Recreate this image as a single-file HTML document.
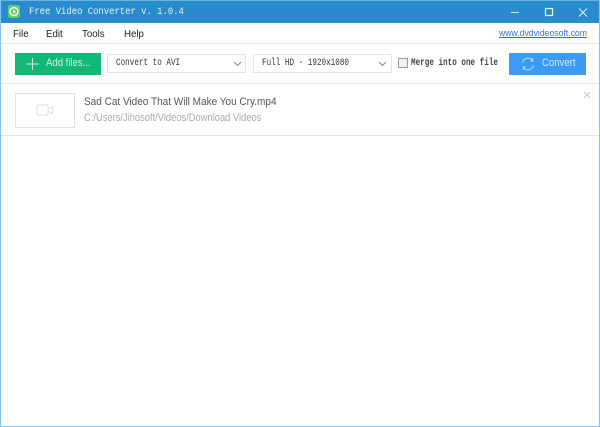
<!DOCTYPE html>
<html>
<head>
<meta charset="utf-8">
<style>
html,body{margin:0;padding:0;background:#fff}
#w{position:relative;width:600px;height:427px;overflow:hidden;background:#fff;font-family:"Liberation Sans",sans-serif}
#w div,#w svg,#w span{position:absolute}
.t{white-space:nowrap;line-height:14px;transform-origin:0 50%}
.m{font-family:"Liberation Mono",monospace;font-size:10px;color:#333;white-space:nowrap;line-height:14px;transform-origin:0 50%;transform:scaleX(.763)}
</style>
</head>
<body>
<div id="w">
<div style="left:0;top:0;width:600px;height:23px;background:#288bcb"></div>
<div style="left:0;top:0;width:600px;height:1px;background:#6db5e6"></div>
<div style="left:0;top:0;width:1px;height:427px;background:#7fc4f2"></div>
<div style="left:599px;top:0;width:1px;height:427px;background:#7fc4f2"></div>
<div style="left:0;top:426px;width:600px;height:1px;background:#7fc4f2"></div>

<svg style="left:7px;top:4px" width="14" height="15" viewBox="0 0 14 15">
<rect x="1" y="1" width="12" height="13" rx="2.500" fill="#5fd06a"/>
<circle cx="7" cy="7.500" r="4" fill="none" stroke="#fff" stroke-width="1.400"/>
<path d="M6 5.500L9 7.500L6 9.500Z" fill="#fff"/>
</svg>
<div class="t" style="left:29px;top:6px;font-family:'Liberation Mono',monospace;font-size:10px;color:#e8f3fa;transform:scaleX(.89)">Free Video Converter v. 1.0.4</div>

<svg style="left:505px;top:3px" width="90" height="18" viewBox="0 0 90 18">
<path d="M6 9.500H14" stroke="#d6e9f5" stroke-width="1"/>
<rect x="40.500" y="5.500" width="7" height="7" fill="none" stroke="#e8f3fa" stroke-width="1.200"/>
<path d="M74 5.500L82 13.500M82 5.500L74 13.500" stroke="#e8f3fa" stroke-width="1"/>
</svg>

<div class="t" style="left:13px;top:27px;font-size:10.500px;color:#222;transform:scaleX(.92)">File</div>
<div class="t" style="left:46px;top:27px;font-size:10.500px;color:#222;transform:scaleX(.92)">Edit</div>
<div class="t" style="left:82px;top:27px;font-size:10.500px;color:#222;transform:scaleX(.92)">Tools</div>
<div class="t" style="left:124px;top:27px;font-size:10.500px;color:#222;transform:scaleX(.92)">Help</div>
<div class="t" style="left:499px;top:27px;font-size:9.500px;color:#3f6fc4;text-decoration:underline;transform:scaleX(.91)">www.dvdvideosoft.com</div>
<div style="left:1px;top:43px;width:598px;height:1px;background:#e6e6e6"></div>

<div style="left:15px;top:53px;width:86px;height:22px;background:#12b877"></div>
<svg style="left:26px;top:57px" width="14" height="14" viewBox="0 0 14 14"><path d="M6.500 1V13M0.500 7H12.500" stroke="#d8f4e8" stroke-width="1"/></svg>
<div class="t" style="left:46px;top:56px;font-size:11px;color:#d0f2e3;transform:scaleX(.87)">Add files...</div>

<div style="left:107px;top:54px;width:137px;height:17px;border:1px solid #e4e4e4;background:#fff"></div>
<div class="m" style="left:116px;top:57px">Convert to AVI</div>
<svg style="left:233px;top:61px" width="9" height="6" viewBox="0 0 9 6"><path d="M1 1L4.500 4.500L8 1" fill="none" stroke="#888" stroke-width="1"/></svg>

<div style="left:253px;top:54px;width:137px;height:17px;border:1px solid #e4e4e4;background:#fff"></div>
<div class="m" style="left:262px;top:57px">Full HD - 1920x1080</div>
<svg style="left:378px;top:61px" width="9" height="6" viewBox="0 0 9 6"><path d="M1 1L4.500 4.500L8 1" fill="none" stroke="#888" stroke-width="1"/></svg>

<div style="left:398px;top:58px;width:8px;height:8px;border:1px solid #999;background:#f4f4f4"></div>
<div class="m" style="left:411px;top:57px;font-weight:bold;color:#444">Merge into one file</div>

<div style="left:509px;top:53px;width:77px;height:22px;background:#3b9bf5"></div>
<svg style="left:521px;top:57px" width="14" height="14" viewBox="0 0 14 14"><path d="M1.500 6A5.500 5.500 0 0 1 11.500 3.500M12.500 8A5.500 5.500 0 0 1 2.500 10.500M11.800 1V4H9M2.200 13V10H5" fill="none" stroke="#b8dcfb" stroke-width="1"/></svg>
<div class="t" style="left:542px;top:56px;font-size:11px;color:#d5eafd;transform:scaleX(.87)">Convert</div>

<div style="left:1px;top:83px;width:598px;height:1px;background:#e6e6e6"></div>

<div style="left:15px;top:93px;width:58px;height:33px;border:1px solid #e2e2e2;background:#fff"></div>
<svg style="left:36px;top:104px" width="19" height="13" viewBox="0 0 19 13"><rect x="1" y="1" width="11" height="10" rx="1.500" fill="none" stroke="#e0e0e0" stroke-width="1"/><path d="M12 5L16.500 2.500V9.500L12 7" fill="none" stroke="#e0e0e0" stroke-width="1"/></svg>
<div class="t" style="left:84px;top:95px;font-size:11px;color:#555;transform:scaleX(.91)">Sad Cat Video That Will Make You Cry.mp4</div>
<div class="t" style="left:84px;top:111px;font-size:11px;color:#aaa;transform:scaleX(.85)">C:/Users/Jihosoft/Videos/Download Videos</div>
<svg style="left:583px;top:91px" width="8" height="8" viewBox="0 0 8 8"><path d="M1 1L7 7M7 1L1 7" stroke="#c4c4c4" stroke-width="1"/></svg>
<div style="left:1px;top:135px;width:598px;height:1px;background:#e6e6e6"></div>
</div>
</body>
</html>
